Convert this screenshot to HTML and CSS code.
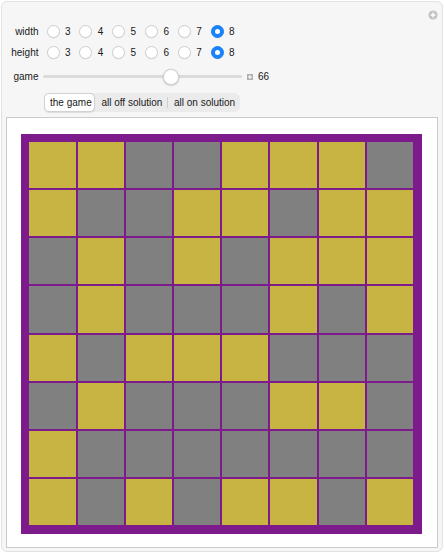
FILE: index.html
```html
<!DOCTYPE html>
<html>
<head>
<meta charset="utf-8">
<link rel="stylesheet" href="styles.css">
</head>
<body>
<div class="panel">
  <div class="corner-icon"><svg width="10" height="10" viewBox="0 0 10 10"><circle cx="5" cy="5" r="4.6" fill="#c3c3c3"/><path d="M5 2.6v4.8M2.6 5h4.8" stroke="#fff" stroke-width="1.4"/></svg></div>
  <div class="controls">
    <div class="row">
      <span class="label">width</span>
      <div class="radios">
        <span class="opt"><span class="radio"></span><span class="num">3</span></span>
        <span class="opt"><span class="radio"></span><span class="num">4</span></span>
        <span class="opt"><span class="radio"></span><span class="num">5</span></span>
        <span class="opt"><span class="radio"></span><span class="num">6</span></span>
        <span class="opt"><span class="radio"></span><span class="num">7</span></span>
        <span class="opt"><span class="radio on"></span><span class="num">8</span></span>
      </div>
    </div>
    <div class="row">
      <span class="label">height</span>
      <div class="radios">
        <span class="opt"><span class="radio"></span><span class="num">3</span></span>
        <span class="opt"><span class="radio"></span><span class="num">4</span></span>
        <span class="opt"><span class="radio"></span><span class="num">5</span></span>
        <span class="opt"><span class="radio"></span><span class="num">6</span></span>
        <span class="opt"><span class="radio"></span><span class="num">7</span></span>
        <span class="opt"><span class="radio on"></span><span class="num">8</span></span>
      </div>
    </div>
    <div class="row slider-row">
      <span class="label">game</span>
      <div class="slider"><div class="track"></div><div class="thumb"></div></div>
      <span class="plus"><svg width="6" height="6" viewBox="0 0 6 6"><rect width="6" height="6" fill="#b0b0b0"/><path d="M3 1v4M1 3h4" stroke="#fff" stroke-width="1"/></svg></span>
      <span class="value">66</span>
    </div>
    <div class="btn-row">
      <div class="seg">
        <span class="btn sel">the game</span>
        <span class="btn off">all off solution</span>
        <span class="divider"></span>
        <span class="btn on">all on solution</span>
      </div>
    </div>
  </div>
  <div class="output">
    <div class="board">
      <div class="c y"></div><div class="c y"></div><div class="c g"></div><div class="c g"></div><div class="c y"></div><div class="c y"></div><div class="c y"></div><div class="c g"></div>
      <div class="c y"></div><div class="c g"></div><div class="c g"></div><div class="c y"></div><div class="c y"></div><div class="c g"></div><div class="c y"></div><div class="c y"></div>
      <div class="c g"></div><div class="c y"></div><div class="c g"></div><div class="c y"></div><div class="c g"></div><div class="c y"></div><div class="c y"></div><div class="c y"></div>
      <div class="c g"></div><div class="c y"></div><div class="c g"></div><div class="c g"></div><div class="c g"></div><div class="c y"></div><div class="c g"></div><div class="c y"></div>
      <div class="c y"></div><div class="c g"></div><div class="c y"></div><div class="c y"></div><div class="c y"></div><div class="c g"></div><div class="c g"></div><div class="c g"></div>
      <div class="c g"></div><div class="c y"></div><div class="c g"></div><div class="c g"></div><div class="c g"></div><div class="c y"></div><div class="c y"></div><div class="c g"></div>
      <div class="c y"></div><div class="c g"></div><div class="c g"></div><div class="c g"></div><div class="c g"></div><div class="c g"></div><div class="c g"></div><div class="c g"></div>
      <div class="c y"></div><div class="c g"></div><div class="c y"></div><div class="c g"></div><div class="c y"></div><div class="c y"></div><div class="c g"></div><div class="c y"></div>
    </div>
  </div>
</div>
</body>
</html>
```
FILE: styles.css
```css
html, body {
  margin: 0;
  padding: 0;
  background: #ffffff;
}
body {
  font-family: "Liberation Sans", Arial, sans-serif;
  font-size: 10px;
  color: #1a1a1a;
}
.panel {
  position: relative;
  box-sizing: border-box;
  margin: 1px;
  width: 442px;
  height: 551px;
  border: 1px solid #e2e2e2;
  border-radius: 6px;
  background: #f6f6f6;
  padding: 0 4px;
  display: flex;
  flex-direction: column;
}
.corner-icon {
  position: absolute;
  right: 4px;
  top: 8px;
  width: 10px;
  height: 10px;
}
.corner-icon svg { display: block; }
.controls {
  padding-top: 19px;
  margin-left: -4px;
  display: flex;
  flex-direction: column;
}
.row {
  display: flex;
  align-items: center;
  height: 21px;
}
.label {
  width: 36.5px;
  text-align: right;
  flex: none;
}
.radios {
  display: flex;
  align-items: center;
  margin-left: 8.2px;
}
.opt {
  display: flex;
  align-items: center;
  width: 32.8px;
}
.radio {
  box-sizing: border-box;
  width: 13px;
  height: 13px;
  border-radius: 50%;
  background: #ffffff;
  border: 1px solid #cfcfcf;
  box-shadow: 0 0.5px 1px rgba(0,0,0,0.08);
  position: relative;
  flex: none;
}
.radio.on {
  background: #1a82fb;
  border-color: #1a82fb;
}
.radio.on::after {
  content: "";
  position: absolute;
  left: 3px;
  top: 3px;
  width: 5px;
  height: 5px;
  border-radius: 50%;
  background: #ffffff;
}
.num {
  margin-left: 5.3px;
}
.slider-row {
  height: 27px;
}
.slider {
  position: relative;
  margin-left: 4.2px;
  width: 199px;
  height: 16px;
  display: flex;
  align-items: center;
}
.track {
  width: 100%;
  height: 3px;
  border-radius: 2px;
  background: #dcdcdc;
}
.thumb {
  position: absolute;
  left: 120px;
  top: 0;
  box-sizing: border-box;
  width: 16px;
  height: 16px;
  border-radius: 50%;
  background: #ffffff;
  border: 0.5px solid #d4d4d4;
  box-shadow: 0 0.5px 2px rgba(0,0,0,0.25);
}
.plus {
  margin-left: 5.7px;
  width: 6px;
  height: 6px;
  display: flex;
}
.plus svg { display: block; }
.value {
  margin-left: 4.5px;
}
.btn-row {
  margin-top: 3px;
  padding-left: 42px;
  display: flex;
}
.seg {
  display: flex;
  align-items: center;
  height: 19px;
  background: #ebebeb;
  border-radius: 6px;
}
.btn {
  box-sizing: border-box;
  height: 19px;
  display: flex;
  align-items: center;
  border-radius: 5px;
  border: 1px solid transparent;
}
.btn.sel {
  background: #ffffff;
  border-color: #d2d2d2;
  padding: 0 2px 0 5px;
  box-shadow: 0 0.5px 1px rgba(0,0,0,0.1);
}
.btn.off {
  padding: 0 4px 0 5.7px;
}
.btn.on {
  padding: 0 4px 0 4.6px;
}
.divider {
  width: 1px;
  height: 11px;
  background: #cfcfcf;
}
.output {
  margin-top: 5px;
  box-sizing: border-box;
  height: 431px;
  background: #ffffff;
  border: 1px solid #cbcbcb;
  padding: 16px 14px 0 14px;
}
.board {
  box-sizing: border-box;
  width: 401px;
  height: 400px;
  background: #7d1a8c;
  padding: 8px 9px 9px 8.3px;
  display: grid;
  grid-template-columns: repeat(8, 1fr);
  grid-template-rows: repeat(8, 1fr);
  gap: 2px;
}
.c.y { background: #c8b442; }
.c.g { background: #808080; }
```
